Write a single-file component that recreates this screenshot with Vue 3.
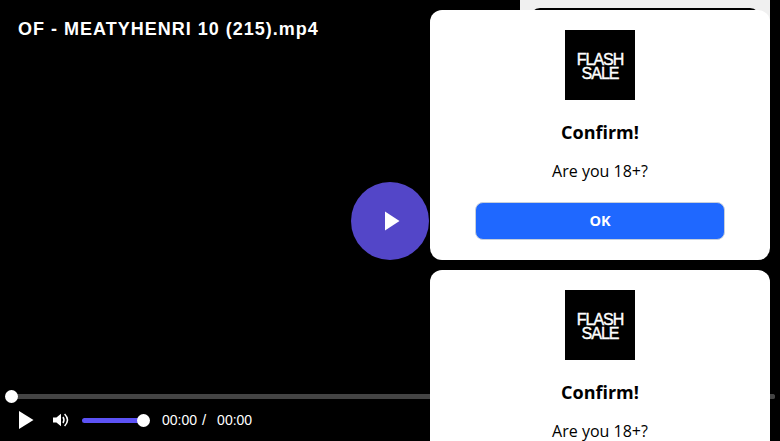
<script setup>
const cards = [1, 2]
</script>

<template>
  <div class="stage">
    <div class="player">
      <div class="title">OF - MEATYHENRI 10 (215).mp4</div>
      <div class="controls">
        <div class="seek"><span class="seek-dot"></span><span class="seek-end"></span></div>
        <div class="row">
          <svg class="play-small" width="16" height="18" viewBox="0 0 16 18"><path d="M0 0 L14.5 9 L0 18 Z" fill="#fff"/></svg>
          <svg class="vol" width="16" height="14" viewBox="0 0 16 14">
            <path d="M0 4.5 H3.4 L8 0.8 V13.2 L3.4 9.5 H0 Z" fill="#fff"/>
            <path d="M10 4 Q12 7 10 10" fill="none" stroke="#fff" stroke-width="1.5"/>
            <path d="M11.6 1 Q17.4 7 11.6 13" fill="none" stroke="#fff" stroke-width="1.5"/>
          </svg>
          <div class="volume"><span class="volume-dot"></span></div>
          <span class="time">00:00 <span class="slash">/</span></span>
          <span class="time total">00:00</span>
        </div>
      </div>
    </div>

    <div class="big-play">
      <svg width="15" height="20" viewBox="0 0 15 20"><path d="M0 0.5 L14.5 10 L0 19.5 Z" fill="#fff"/></svg>
    </div>

    <div class="behind"><div class="behind-inner"></div></div>

    <div class="stack">
      <div v-for="c in cards" :key="c" class="card">
        <div class="logo">FLASH<br>SALE</div>
        <div class="heading">Confirm!</div>
        <div class="question">Are you 18+?</div>
        <button class="ok">OK</button>
      </div>
    </div>
  </div>
</template>

<style>
html, body { margin: 0; background: #000; }
</style>

<style scoped>
.stage {
  position: relative;
  width: 780px;
  height: 441px;
  overflow: hidden;
  background: #000;
}
.player {
  height: 100%;
  display: flex;
  flex-direction: column;
  justify-content: space-between;
  font-family: "Liberation Sans", Arial, sans-serif;
  color: #fff;
}
.title {
  padding: 19px 0 0 18px;
  font-size: 18px;
  line-height: 21px;
  font-weight: 700;
  letter-spacing: 1px;
}
.controls {
  padding: 0 5px 9px 5px;
}
.seek {
  position: relative;
  height: 5px;
  background: #444;
  margin: 0 0 9px 5px;
  border-radius: 3px;
}
.seek-dot {
  position: absolute;
  left: -5px;
  top: -4px;
  width: 13px;
  height: 13px;
  border-radius: 50%;
  background: #fff;
}
.seek-end {
  position: absolute;
  right: 0;
  top: 0;
  width: 5px;
  height: 5px;
  border-radius: 50%;
  background: #444;
}
.row {
  display: flex;
  align-items: center;
  height: 24px;
  padding-left: 14px;
  font-size: 14px;
}
.play-small { margin-right: 18px; }
.vol { margin-right: 13px; }
.volume {
  position: relative;
  width: 62px;
  height: 5px;
  border-radius: 3px;
  background: #5c52f5;
  margin-right: 18px;
  top: 0.5px;
}
.volume-dot {
  position: absolute;
  right: -6px;
  top: -4px;
  width: 13px;
  height: 13px;
  border-radius: 50%;
  background: #fff;
}
.time { line-height: 16px; white-space: pre; }
.slash { font-size: 15px; margin-left: 1px; }
.total { margin-left: 11px; }
.big-play {
  position: absolute;
  left: 351px;
  top: 182px;
  width: 78px;
  height: 78px;
  border-radius: 50%;
  background: #5346c8;
  display: flex;
  align-items: center;
  justify-content: center;
  padding-left: 4px;
  box-sizing: border-box;
}
.behind {
  position: absolute;
  left: 520px;
  top: 0;
  width: 250px;
  height: 30px;
  background: #f0f0f0;
}
.behind-inner {
  margin: 8px 10px 0;
  height: 22px;
  background: #000;
  border-radius: 10px 10px 0 0;
}
.stack {
  position: absolute;
  left: 430px;
  top: 10px;
  width: 340px;
  display: flex;
  flex-direction: column;
  gap: 10px;
  font-family: "Open Sans", "Noto Sans", sans-serif;
}
.card {
  height: 250px;
  box-sizing: border-box;
  background: #fff;
  border-radius: 12px;
  padding-top: 20px;
  display: flex;
  flex-direction: column;
  align-items: center;
  color: #000;
}
.logo {
  width: 70px;
  height: 70px;
  background: #000;
  color: #fff;
  text-align: center;
  font-family: "Liberation Sans", Arial, sans-serif;
  font-size: 16px;
  line-height: 13.5px;
  letter-spacing: -1px;
  -webkit-text-stroke: 0.4px #fff;
  padding-top: 23px;
  box-sizing: border-box;
}
.heading {
  margin-top: 20px;
  font-size: 18px;
  line-height: 24px;
  font-weight: 700;
}
.question {
  margin-top: 16px;
  font-size: 16px;
  line-height: 22px;
}
.ok {
  margin-top: 20px;
  width: 250px;
  height: 38px;
  box-sizing: border-box;
  background: #1f68ff;
  border: 1px solid #c6cfdc;
  border-radius: 8px;
  color: #fff;
  font-family: "Open Sans", "Noto Sans", sans-serif;
  font-size: 14.5px;
  font-weight: 700;
  padding: 0 0 2px;
}
</style>
